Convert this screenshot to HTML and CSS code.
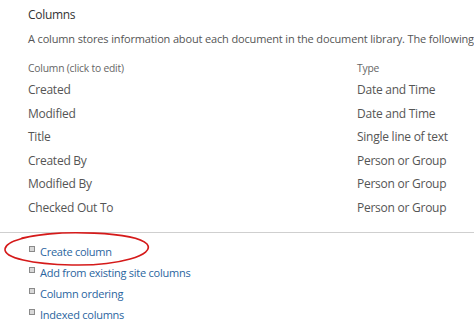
FILE: index.html
```html
<!DOCTYPE html>
<html>
<head>
<meta charset="utf-8">
<link rel="stylesheet" href="styles.css">
</head>
<body>
<div class="page">
  <div class="section">
    <div class="title">Columns</div>
    <div class="desc">A column stores information about each document in the document library. The following columns are currently available in this document library:</div>
    <div class="grid">
      <div class="head">Column (click to edit)</div><div class="head">Type</div>
      <div class="cell">Created</div><div class="cell">Date and Time</div>
      <div class="cell">Modified</div><div class="cell">Date and Time</div>
      <div class="cell">Title</div><div class="cell">Single line of text</div>
      <div class="cell">Created By</div><div class="cell">Person or Group</div>
      <div class="cell">Modified By</div><div class="cell">Person or Group</div>
      <div class="cell">Checked Out To</div><div class="cell">Person or Group</div>
    </div>
  </div>
  <div class="sep"></div>
  <ul class="links">
    <li><span class="bullet"></span><a href="#">Create column</a></li>
    <li><span class="bullet"></span><a href="#">Add from existing site columns</a></li>
    <li><span class="bullet"></span><a href="#">Column ordering</a></li>
    <li><span class="bullet"></span><a href="#">Indexed columns</a></li>
  </ul>
  <svg class="circle" width="160" height="40" viewBox="0 228 160 40">
    <path d="M22 238 C60 229, 135 232, 147 244 C156 255, 118 266, 72 265 C32 264, 4 258, 5 249 C6 241, 28 235, 62 233" fill="none" stroke="#d51a1a" stroke-width="1.6" stroke-linecap="round"/>
  </svg>
</div>
</body>
</html>
```

FILE: styles.css
```css
html, body {
  margin: 0;
  padding: 0;
  background: #ffffff;
}
.page {
  position: relative;
  width: 474px;
  height: 331px;
  overflow: hidden;
  font-family: "Open Sans", "Noto Sans", sans-serif;
  color: #444444;
}
.section {
  padding-left: 28px;
}
.title {
  padding-top: 5px;
  font-size: 12px;
  letter-spacing: -0.3px;
  line-height: 20px;
  color: #333333;
}
.desc {
  margin-top: 4px;
  font-size: 11px;
  letter-spacing: -0.15px;
  line-height: 20px;
  white-space: nowrap;
  color: #555555;
}
.grid {
  margin-top: 9px;
  display: grid;
  grid-template-columns: 329px auto;
}
.head {
  font-size: 10.3px;
  letter-spacing: -0.2px;
  line-height: 20px;
  color: #666666;
}
.cell {
  font-size: 12px;
  letter-spacing: -0.25px;
  line-height: 23.6px;
  color: #555555;
  white-space: nowrap;
}
.sep {
  margin-top: 12px;
  height: 1px;
  background: #cfcfcf;
}
.links {
  list-style: none;
  margin: 8px 0 0 0;
  padding: 0 0 0 29px;
}
.links li {
  display: flex;
  align-items: center;
  height: 21px;
}
.bullet {
  width: 4px;
  height: 4px;
  border: 1px solid #8a8a8a;
  background: #d8d8d8;
  margin-right: 5px;
  margin-top: -4px;
}
.links a {
  font-size: 11px;
  letter-spacing: -0.25px;
  color: #2a65a0;
  text-decoration: none;
}
.circle {
  position: absolute;
  left: 0;
  top: 228px;
}
```
